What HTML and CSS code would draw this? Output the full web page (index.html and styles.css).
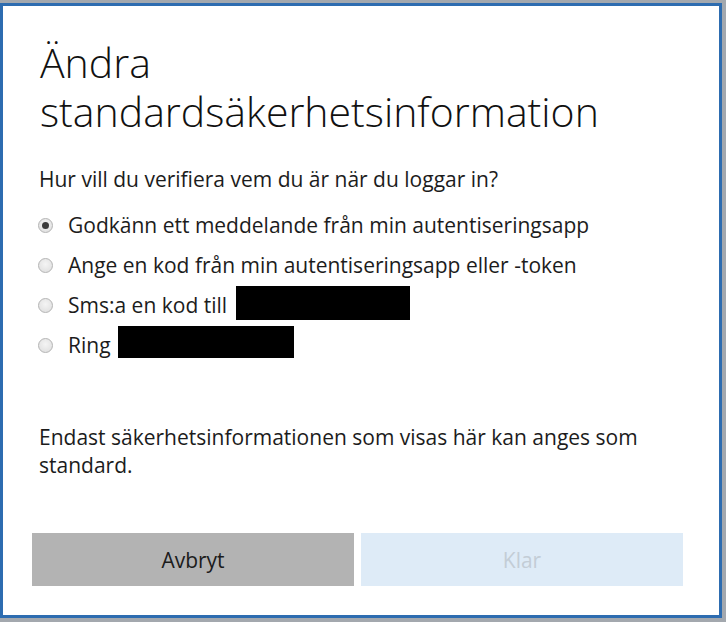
FILE: index.html
```html
<!DOCTYPE html>
<html lang="sv">
<head>
<meta charset="utf-8">
<title>Ändra standardsäkerhetsinformation</title>
<link rel="stylesheet" href="styles.css">
</head>
<body>
<div class="dialog">
  <h1 class="title">Ändra standardsäkerhetsinformation</h1>
  <p class="question">Hur vill du verifiera vem du är när du loggar in?</p>
  <div class="options">
    <label class="option"><span class="radio checked"></span><span class="label">Godkänn ett meddelande från min autentiseringsapp</span></label>
    <label class="option"><span class="radio"></span><span class="label">Ange en kod från min autentiseringsapp eller -token</span></label>
    <label class="option"><span class="radio"></span><span class="label">Sms:a en kod till <span class="redact redact-sms"></span></span></label>
    <label class="option"><span class="radio"></span><span class="label">Ring <span class="redact redact-call"></span></span></label>
  </div>
  <p class="note">Endast säkerhetsinformationen som visas här kan anges som standard.</p>
  <div class="actions">
    <button class="btn btn-cancel">Avbryt</button>
    <button class="btn btn-done" disabled>Klar</button>
  </div>
</div>
</body>
</html>
```

FILE: styles.css
```css
html, body {
  margin: 0;
  padding: 0;
}
body {
  width: 726px;
  height: 622px;
  background: #a3a8ae;
  padding-top: 3px;
  box-sizing: border-box;
  font-family: "Open Sans", "Noto Sans", sans-serif;
  color: #1c1c1c;
}
.dialog {
  width: 722px;
  height: 615px;
  box-sizing: border-box;
  border: 3px solid #2d6cb0;
  background: #ffffff;
  padding: 32px 36px 0 29px;
  display: flex;
  flex-direction: column;
}
.title {
  margin: 0 0 0 8px;
  font-size: 41px;
  font-weight: 300;
  line-height: 49px;
  color: #111;
  width: 600px;
}
.question {
  margin: 29px 0 0 7px;
  font-size: 21px;
  line-height: 28px;
}
.options {
  margin: 12px 0 0 6px;
  display: flex;
  flex-direction: column;
}
.option {
  height: 40px;
  display: flex;
  align-items: center;
  gap: 15px;
  font-size: 21px;
}
.radio {
  width: 15px;
  height: 15px;
  box-sizing: border-box;
  border-radius: 50%;
  border: 1px solid #b4b4b4;
  background: radial-gradient(circle at 50% 40%, #f4f4f4 0%, #dcdcdc 100%);
  display: flex;
  align-items: center;
  justify-content: center;
  flex: none;
}
.radio.checked::after {
  content: "";
  width: 7px;
  height: 7px;
  border-radius: 50%;
  background: #3a3a3a;
}
.label {
  display: flex;
  align-items: center;
  white-space: pre;
}
.redact {
  display: inline-block;
  background: #000;
}
.redact-sms {
  width: 174px;
  height: 34px;
  margin-top: -5px;
  margin-left: 3px;
}
.redact-call {
  width: 176px;
  height: 32px;
  margin-top: -7px;
  margin-left: 2px;
}
.note {
  margin: 58px 0 0 7px;
  font-size: 21px;
  line-height: 28px;
}
.actions {
  margin-top: 54px;
  display: grid;
  grid-template-columns: 322px 322px;
  gap: 7px;
}
.btn {
  height: 53px;
  border: none;
  font-family: "Open Sans", "Noto Sans", sans-serif;
  font-size: 21px;
  padding: 0;
}
.btn-cancel {
  background: #b3b3b3;
  color: #1c1c1c;
}
.btn-done {
  background: #deebf7;
  color: #c3cdd6;
}
```
